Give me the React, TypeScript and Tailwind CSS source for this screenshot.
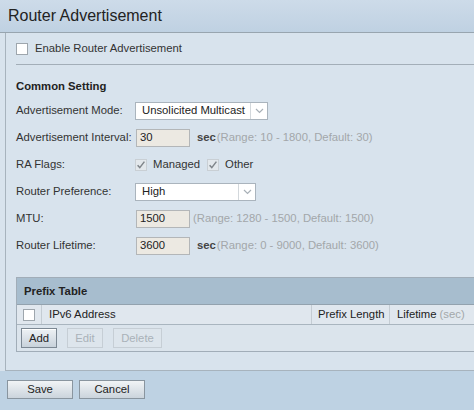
import React from "react";

function Chevron() {
  return (
    <svg width="9" height="6" viewBox="0 0 9 6" fill="none">
      <path d="M1 1l3.5 3.5L8 1" stroke="#a8b0b7" strokeWidth="1.2" />
    </svg>
  );
}

function Check() {
  return (
    <span className="flex h-[12px] w-[12px] items-center justify-center border border-[#c9cfd4] bg-[#e3e8ec]">
      <svg width="10" height="10" viewBox="0 0 10 10" fill="none">
        <path d="M1.6 5.2l2.2 2.4L8.4 1.6" stroke="#7f858a" strokeWidth="1.5" />
      </svg>
    </span>
  );
}

function Select({ value, width }: { value: string; width: string }) {
  return (
    <div className={`flex h-[18px] items-center border border-[#aab4bd] bg-white ${width}`}>
      <span className="flex-1 pl-[6px] text-[#222]">{value}</span>
      <span className="flex h-full w-[17px] items-center justify-center border-l border-[#d3d8dc]">
        <Chevron />
      </span>
    </div>
  );
}

function TextBox({ value }: { value: string }) {
  return (
    <div className="flex h-[18px] w-[54px] items-center border border-[#b3b6b8] bg-[#ece9e2] pl-[3px] text-[#222]">
      {value}
    </div>
  );
}

function Row({ label, children }: { label: string; children: React.ReactNode }) {
  return (
    <div className="flex h-[27px] items-center">
      <div className="w-[119px]">{label}</div>
      {children}
    </div>
  );
}

const Range = ({ text }: { text: string }) => (
  <span className="text-[#a3a7aa]">{text}</span>
);

export default function App() {
  return (
    <div className="h-[410px] w-[474px] overflow-hidden bg-[#d8e3ed] font-['Liberation_Sans',Arial,sans-serif] text-[11.3px] text-[#333]">
      <div className="flex h-[33px] items-center border-b border-[#98a5af] bg-gradient-to-b from-[#cddbe9] to-[#bfd1e2] pl-2 text-[16px] text-[#222]">
        Router Advertisement
      </div>

      <div className="ml-[5px] h-[338px] border-b border-l border-[#a7b3bd] pl-[10px]">
        <div className="flex h-[32px] items-center gap-[7px] border-b border-[#a3aeb8]">
          <span className="h-[12px] w-[12px] border border-[#9ea6ad] bg-white" />
          <span>Enable Router Advertisement</span>
        </div>

        <div className="mt-[15px] font-bold leading-[13px] text-[#222]">Common Setting</div>

        <div className="mt-[4px]">
          <Row label="Advertisement Mode:">
            <Select value="Unsolicited Multicast" width="w-[133px]" />
          </Row>
          <Row label="Advertisement Interval:">
            <div className="ml-[1px] flex items-center">
              <TextBox value="30" />
              <span className="ml-[7px] font-bold text-[#444]">sec</span>
              <span className="ml-[1px]">
                <Range text="(Range: 10 - 1800, Default: 30)" />
              </span>
            </div>
          </Row>
          <Row label="RA Flags:">
            <div className="flex items-center">
              <Check />
              <span className="ml-[6px]">Managed</span>
              <span className="ml-[7px]">
                <Check />
              </span>
              <span className="ml-[6px]">Other</span>
            </div>
          </Row>
          <Row label="Router Preference:">
            <Select value="High" width="w-[121px]" />
          </Row>
          <Row label="MTU:">
            <div className="ml-[1px] flex items-center">
              <TextBox value="1500" />
              <span className="ml-[3px]">
                <Range text="(Range: 1280 - 1500, Default: 1500)" />
              </span>
            </div>
          </Row>
          <Row label="Router Lifetime:">
            <div className="ml-[1px] flex items-center">
              <TextBox value="3600" />
              <span className="ml-[7px] font-bold text-[#444]">sec</span>
              <span className="ml-[1px]">
                <Range text="(Range: 0 - 9000, Default: 3600)" />
              </span>
            </div>
          </Row>
        </div>

        <div className="mt-[18px] w-[480px] border border-[#a1adb8]">
          <div className="flex h-[27px] items-center border-b border-[#93a2ae] bg-[#a7bdce] pl-[7px] font-bold text-[#222]">
            Prefix Table
          </div>
          <div className="flex h-[20px] border-b border-[#a9b5bf] bg-[#e0e7ee] text-[#222]">
            <div className="flex w-[25px] items-center justify-center border-r border-[#c4ccd3]">
              <span className="h-[12px] w-[12px] border border-[#9ea6ad] bg-white" />
            </div>
            <div className="flex w-[270px] items-center border-r border-[#c4ccd3] pl-[7px]">IPv6 Address</div>
            <div className="flex w-[78px] items-center border-r border-[#c4ccd3] pl-[6px]">Prefix Length</div>
            <div className="flex flex-1 items-center pl-[7px]">
              Lifetime <span className="ml-[3px] text-[#a3a7aa]">(sec)</span>
            </div>
          </div>
          <div className="flex h-[26px] items-center gap-[10px] bg-[#dbe4ec] pl-[4px]">
            <button className="h-[20px] w-[36px] border border-[#7c8893] bg-gradient-to-b from-[#eef2f5] to-[#c8d2db] text-[#222] shadow-[inset_0_1px_0_#fff]">
              Add
            </button>
            <button className="h-[20px] w-[36px] border border-[#c6ced5] bg-[#dde5ec] text-[#aab2b9]">Edit</button>
            <button className="h-[20px] w-[49px] border border-[#c6ced5] bg-[#dde5ec] text-[#aab2b9]">Delete</button>
          </div>
        </div>
      </div>

      <div className="flex h-[40px] gap-[6px] bg-[#bed2e3] pl-[7px] pt-[9px]">
        <button className="h-[19px] w-[66px] border border-[#89959f] bg-gradient-to-b from-[#f1f4f6] to-[#cbd4dc] text-[#222]">
          Save
        </button>
        <button className="h-[19px] w-[66px] border border-[#89959f] bg-gradient-to-b from-[#f1f4f6] to-[#cbd4dc] text-[#222]">
          Cancel
        </button>
      </div>
    </div>
  );
}
